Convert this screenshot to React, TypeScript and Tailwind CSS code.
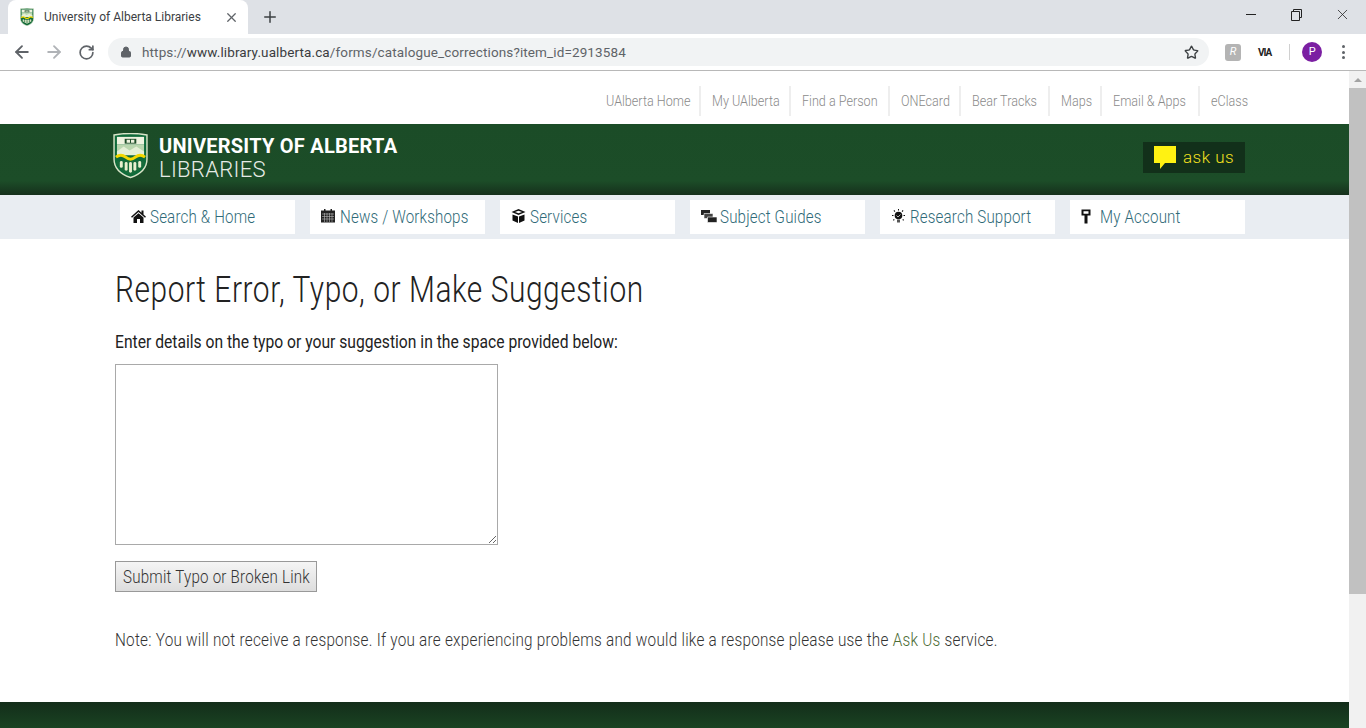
import type { ReactNode } from "react";
import { ArrowLeft, ArrowRight, RotateCw, Lock, Star, X, Plus } from "lucide-react";

function Shield({ size }: { size: number }) {
  return (
    <svg width={size} height={size * 1.3} viewBox="0 0 36 47">
      <path d="M1 2 Q18 -1 35 2 V27 Q35 40 18 46 Q1 40 1 27 Z" fill="#0f6b3a" stroke="#d8e4c8" strokeWidth="1.5" />
      <path d="M4 4 H32 V12 H4 Z" fill="#eef3df" />
      <path d="M12 6 H24 V11 H12 Z" fill="#1c4c27" />
      <path d="M14 7 H17.500 V10 H14 Z M18.500 7 H22 V10 H18.500 Z" fill="#eef3df" />
      <path d="M4 12 H32 V22 H4 Z" fill="#b9d6ae" />
      <path d="M4 19 L11 14 L17 18 L24 14 L32 19 V23 H4 Z" fill="#e4efd6" />
      <path d="M3 25 Q8 21 13 25 T23 25 T33 25" fill="none" stroke="#f4d800" strokeWidth="3" />
      <path d="M4 29 H32 V32 Q30 38 18 43 Q6 38 4 32 Z" fill="#196b3b" />
      <g fill="#e9efcf">
        <rect x="7" y="29" width="3" height="7" rx="1.500" />
        <rect x="12" y="30" width="3" height="9" rx="1.500" />
        <rect x="16.500" y="30" width="3" height="11" rx="1.500" />
        <rect x="21" y="30" width="3" height="9" rx="1.500" />
        <rect x="26" y="29" width="3" height="7" rx="1.500" />
      </g>
    </svg>
  );
}

const HomeIcon = (
  <svg width="15" height="15" viewBox="0 0 15 15" fill="#111">
    <path d="M7.500 1 L10.500 3.700 V1.500 H12.500 V5.500 L15 7.800 L14 8.800 L7.500 3 L1 8.800 L0 7.800 Z" />
    <path d="M2.500 8.500 L7.500 4.200 L12.500 8.500 V14 H9 V10 H6 V14 H2.500 Z" />
  </svg>
);

const CalendarIcon = (
  <svg width="14" height="14" viewBox="0 0 14 14">
    <path d="M0 1.500 H14 V13.500 H0 Z" fill="#222" />
    <path d="M3 0 H4.500 V2.500 H3 Z M9.500 0 H11 V2.500 H9.500 Z" fill="#222" />
    <path d="M1 5 H13 M1 7.500 H13 M1 10 H13 M3.500 4 V13 M6 4 V13 M8.500 4 V13 M11 4 V13" stroke="#bbb" strokeWidth="0.6" />
  </svg>
);

const BoxIcon = (
  <svg width="15" height="14" viewBox="0 0 15 14" fill="#111">
    <path d="M7.500 0 L14.500 3 L7.500 6 L0.500 3 Z M7.500 1.800 L4 3 L7.500 4.300 L11 3 Z" fillRule="evenodd" />
    <path d="M1.500 5.500 L7 7.500 V14 L1.500 11.500 Z M13.500 5.500 L8 7.500 V14 L13.500 11.500 Z" />
  </svg>
);

const GuidesIcon = (
  <svg width="16" height="13" viewBox="0 0 16 13">
    <path d="M0 0 H9 V5 H0 Z" fill="#222" />
    <path d="M3 3.500 H12 V8.500 H3 Z" fill="#444" stroke="#fff" strokeWidth="0.6" />
    <path d="M6.500 7 H16 V12.500 H6.500 Z" fill="#222" stroke="#fff" strokeWidth="0.6" />
  </svg>
);

const BulbIcon = (
  <svg width="15" height="15" viewBox="0 0 15 15" fill="#111">
    <circle cx="7.500" cy="6.500" r="3.800" />
    <path d="M6 10.500 H9 V13.500 H6 Z" fill="#555" />
    <path d="M5.500 6.500 L7 8 L9.500 5.500" stroke="#ddd" strokeWidth="0.8" fill="none" />
    <path d="M7 0 H8 V1.500 H7 Z M1 6 H2.500 V7 H1 Z M12.500 6 H14 V7 H12.500 Z M2.500 1.700 L3.400 1 L4.300 2.200 L3.500 3 Z M12.500 1.700 L11.600 1 L10.700 2.200 L11.500 3 Z M2.800 10 L3.700 10.800 L2.800 11.700 L2 10.900 Z M12.200 10 L11.300 10.800 L12.200 11.700 L13 10.900 Z" />
  </svg>
);

const KeyIcon = (
  <svg width="10" height="15" viewBox="0 0 10 15" fill="#111">
    <path d="M0.500 0.500 H9.500 V6.500 H6.500 V14.500 H3.500 V6.500 H0.500 Z M2.500 2.300 V4.700 H7.500 V2.300 Z" fillRule="evenodd" />
  </svg>
);

function BrowserChrome() {
  return (
    <div className="shrink-0 font-['Roboto',sans-serif]">
      <div className="h-[34px] bg-[#dee1e6] flex items-end pl-2">
        <div className="w-[240px] h-[34px] bg-white rounded-t-lg flex items-center pl-[12px] pr-[9px]">
          <Shield size={14} />
          <span className="ml-[10px] text-[12px] text-[#3c4043] flex-1">University of Alberta Libraries</span>
          <X size={15} className="text-[#5f6368]" />
        </div>
        <Plus size={18} className="text-[#3c4043] ml-[13px] mb-[8px]" />
        <div className="flex-1" />
        <div className="flex items-center self-start h-[29px] text-[#222]">
          <div className="w-[10px] h-px bg-[#222] mr-[35px]" />
          <svg width="11" height="12" viewBox="0 0 11 12" fill="none" stroke="#222" className="mr-[32px]">
            <path d="M2.500 2.500 V0.500 H10.500 V8.500 H8.500 M0.500 2.500 H8.500 V11.500 H0.500 Z" />
          </svg>
          <X size={17} strokeWidth={1.1} className="mr-[15px]" />
        </div>
      </div>
      <div className="h-[36px] bg-white flex items-center">
        <ArrowLeft size={20} strokeWidth={2.2} className="ml-[12px] text-[#5f6368]" />
        <ArrowRight size={20} strokeWidth={2.2} className="ml-[12px] text-[#b0b3b7]" />
        <RotateCw size={17} strokeWidth={2.4} className="ml-[14px] text-[#5f6368]" />
        <div className="ml-[13px] w-[1101px] h-[28px] rounded-full bg-[#f1f3f4] flex items-center pl-[12px] pr-[10px]">
          <Lock size={12} fill="#5f6368" className="text-[#5f6368]" />
          <span className="ml-[10px] text-[13.500px] tracking-[0.12px] text-[#5f6368] flex-1">
            https://<span className="text-[#3a3c3f]">www.library.ualberta.ca</span>/forms/catalogue_corrections?item_id=2913584
          </span>
          <Star size={15} strokeWidth={2.2} className="text-[#3c4043]" />
        </div>
        <div className="ml-[16px] w-[16px] h-[17px] rounded-[3px] bg-[#b4b4b4] text-white text-[11px] italic flex items-center justify-center">R</div>
        <span className="ml-[17px] text-[10px] font-bold text-[#222] tracking-[-1px]">VIA</span>
        <div className="ml-[18px] w-px h-[16px] bg-[#d0d0d0]" />
        <div className="ml-[12px] w-[20px] h-[20px] rounded-full bg-[#7b1fa2] text-white text-[11px] flex items-center justify-center">P</div>
        <div className="ml-[20px] flex flex-col gap-[2.500px]">
          <div className="w-[3px] h-[3px] rounded-full bg-[#5f6368]" />
          <div className="w-[3px] h-[3px] rounded-full bg-[#5f6368]" />
          <div className="w-[3px] h-[3px] rounded-full bg-[#5f6368]" />
        </div>
      </div>
      <div className="h-px bg-[#b8b8b8]" />
    </div>
  );
}

// the site's condensed face isn't installed, so squeeze Roboto to the same widths
function Narrow({ children }: { children: ReactNode }) {
  return <span className="inline-block whitespace-nowrap origin-left scale-x-[0.84]">{children}</span>;
}

const utilLinks = [
  { label: "UAlberta Home", w: "w-[106px]" },
  { label: "My UAlberta", w: "w-[90px]" },
  { label: "Find a Person", w: "w-[99px]" },
  { label: "ONEcard", w: "w-[71px]" },
  { label: "Bear Tracks", w: "w-[89px]" },
  { label: "Maps", w: "w-[52px]" },
  { label: "Email & Apps", w: "w-[98px]" },
  { label: "eClass", w: "w-[60px]" },
];

const navItems = [
  { label: "Search & Home", icon: HomeIcon },
  { label: "News / Workshops", icon: CalendarIcon },
  { label: "Services", icon: BoxIcon },
  { label: "Subject Guides", icon: GuidesIcon },
  { label: "Research Support", icon: BulbIcon },
  { label: "My Account", icon: KeyIcon },
];

export default function App() {
  return (
    <div className="h-screen overflow-hidden flex flex-col bg-white">
      <BrowserChrome />
      <div className="flex flex-1 min-h-0">
        <div className="flex-1 min-w-0 flex flex-col font-['Roboto',sans-serif] font-light">
          <div className="h-[53px] flex items-start justify-end pt-[15px] pr-[89px]">
            {utilLinks.map((l, i) => (
              <a key={l.label} className={`${l.w} shrink-0 h-[30px] flex items-center pl-[11px] text-[15px] text-[#8a8a8a] ${i < utilLinks.length - 1 ? "border-r-2 border-[#eeeeee]" : ""}`}>
                <Narrow>{l.label}</Narrow>
              </a>
            ))}
          </div>
          <div className="h-[71px] bg-[linear-gradient(#1b4c27_0%,#1c4d28_80%,#16301c_100%)] flex items-start pl-[113px] pr-[104px]">
            <div className="mt-[9px]"><Shield size={35} /></div>
            <div className="ml-[11px] mt-[10px] text-white">
              <div className="text-[20px] leading-[24px] font-bold tracking-[0.25px]">UNIVERSITY OF ALBERTA</div>
              <div className="text-[22px] leading-[24px] font-light text-[#e6ebe6] tracking-[0.3px]">LIBRARIES</div>
            </div>
            <div className="ml-auto mt-[18px] w-[102px] h-[31px] bg-[#12301a] flex items-center pl-[11px]">
              <svg width="22" height="23" viewBox="0 0 22 23">
                <path d="M0 0 H22 V17 H11 L6 23 V17 H0 Z" fill="#fff212" />
              </svg>
              <span className="ml-[7px] mt-px text-[17px] font-light text-[#f4e020] tracking-[0.5px]">ask us</span>
            </div>
          </div>
          <div className="h-[44px] bg-[#e9edf2] flex items-center pl-[120px] gap-[15px]">
            {navItems.map((n) => (
              <a key={n.label} className="w-[175px] h-[34px] pb-[2px] bg-white flex items-center pl-[11px] text-[18px] tracking-[0.2px] text-[#2f6a78]">
                <span className="w-[19px] shrink-0 flex">{n.icon}</span>
                <Narrow>{n.label}</Narrow>
              </a>
            ))}
          </div>
          <div className="flex-1 min-h-0 px-[115px] pt-[28px]">
            <h1 className="text-[36px] leading-[46px] tracking-[0.67px] text-[#222222] whitespace-nowrap origin-left scale-x-[0.83]">Report Error, Typo, or Make Suggestion</h1>
            <p className="mt-[17px] text-[18px] leading-[24px] font-normal text-[#222222] whitespace-nowrap origin-left scale-x-[0.87]">Enter details on the typo or your suggestion in the space provided below:</p>
            <textarea className="block mt-[10px] w-[383px] h-[181px] border border-[#a9a9a9] bg-white resize-y" />
            <button className="block mt-[16px] w-[202px] h-[31px] border border-[#999999] bg-[linear-gradient(#f5f5f5,#dddddd)] text-[18px] tracking-[0.27px] text-[#333333] text-left pl-[7px]">
              <Narrow>Submit Typo or Broken Link</Narrow>
            </button>
            <p className="mt-[36px] text-[18px] leading-[24px] tracking-[0.29px] text-[#333333] whitespace-nowrap origin-left scale-x-[0.85]">
              Note: You will not receive a response. If you are experiencing problems and would like a response please use the <a className="text-[#4c6b35]">Ask Us</a> service.
            </p>
          </div>
          <div className="h-[26px] shrink-0 bg-[linear-gradient(#132d1a,#1a4322)]" />
        </div>
        <div className="w-[17px] shrink-0 bg-[#f1f1f1] flex flex-col">
          <div className="h-[17px] flex items-center justify-center">
            <div className="w-0 h-0 border-x-[4px] border-x-transparent border-b-[4px] border-b-[#a3a3a3]" />
          </div>
          <div className="h-[506px] bg-[#c1c1c1]" />
        </div>
      </div>
    </div>
  );
}
